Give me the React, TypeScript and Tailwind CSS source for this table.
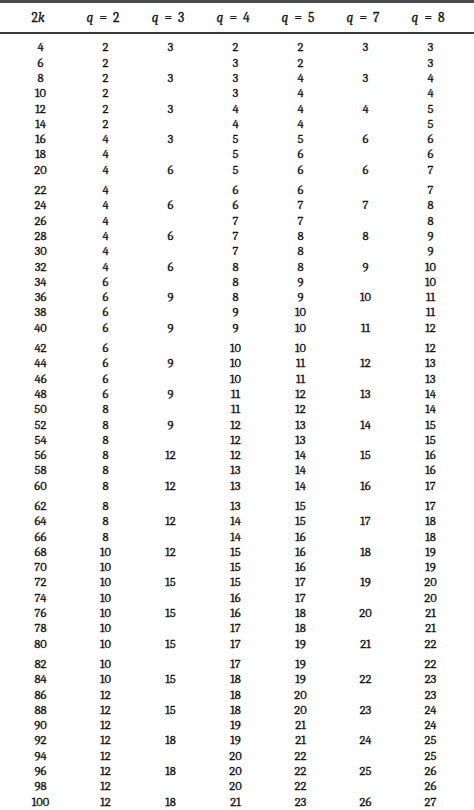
const heads = ["2", "3", "4", "5", "7", "8"];

// 2k, q=2, q=3, q=4, q=5, q=7, q=8  ("" = no entry)
const groups: string[][][] = [
  [
    ["4", "2", "3", "2", "2", "3", "3"],
    ["6", "2", "", "3", "2", "", "3"],
    ["8", "2", "3", "3", "4", "3", "4"],
    ["10", "2", "", "3", "4", "", "4"],
    ["12", "2", "3", "4", "4", "4", "5"],
    ["14", "2", "", "4", "4", "", "5"],
    ["16", "4", "3", "5", "5", "6", "6"],
    ["18", "4", "", "5", "6", "", "6"],
    ["20", "4", "6", "5", "6", "6", "7"],
  ],
  [
    ["22", "4", "", "6", "6", "", "7"],
    ["24", "4", "6", "6", "7", "7", "8"],
    ["26", "4", "", "7", "7", "", "8"],
    ["28", "4", "6", "7", "8", "8", "9"],
    ["30", "4", "", "7", "8", "", "9"],
    ["32", "4", "6", "8", "8", "9", "10"],
    ["34", "6", "", "8", "9", "", "10"],
    ["36", "6", "9", "8", "9", "10", "11"],
    ["38", "6", "", "9", "10", "", "11"],
    ["40", "6", "9", "9", "10", "11", "12"],
  ],
  [
    ["42", "6", "", "10", "10", "", "12"],
    ["44", "6", "9", "10", "11", "12", "13"],
    ["46", "6", "", "10", "11", "", "13"],
    ["48", "6", "9", "11", "12", "13", "14"],
    ["50", "8", "", "11", "12", "", "14"],
    ["52", "8", "9", "12", "13", "14", "15"],
    ["54", "8", "", "12", "13", "", "15"],
    ["56", "8", "12", "12", "14", "15", "16"],
    ["58", "8", "", "13", "14", "", "16"],
    ["60", "8", "12", "13", "14", "16", "17"],
  ],
  [
    ["62", "8", "", "13", "15", "", "17"],
    ["64", "8", "12", "14", "15", "17", "18"],
    ["66", "8", "", "14", "16", "", "18"],
    ["68", "10", "12", "15", "16", "18", "19"],
    ["70", "10", "", "15", "16", "", "19"],
    ["72", "10", "15", "15", "17", "19", "20"],
    ["74", "10", "", "16", "17", "", "20"],
    ["76", "10", "15", "16", "18", "20", "21"],
    ["78", "10", "", "17", "18", "", "21"],
    ["80", "10", "15", "17", "19", "21", "22"],
  ],
  [
    ["82", "10", "", "17", "19", "", "22"],
    ["84", "10", "15", "18", "19", "22", "23"],
    ["86", "12", "", "18", "20", "", "23"],
    ["88", "12", "15", "18", "20", "23", "24"],
    ["90", "12", "", "19", "21", "", "24"],
    ["92", "12", "18", "19", "21", "24", "25"],
    ["94", "12", "", "20", "22", "", "25"],
    ["96", "12", "18", "20", "22", "25", "26"],
    ["98", "12", "", "20", "22", "", "26"],
    ["100", "12", "18", "21", "23", "26", "27"],
  ],
];

export default function App() {
  return (
    <div className="w-[474px] h-[810px] overflow-hidden bg-white text-[#111] font-serif [font-family:Liberation_Serif,Times_New_Roman,serif] [-webkit-text-stroke:0.3px_#111]">
      {/* top rule */}
      <div className="h-[3px] bg-[#4a4a4a]" />

      {/* header */}
      <div className="grid grid-cols-[repeat(7,65px)] px-[8px] h-[29px] items-center text-[13.5px] leading-none">
        <div className="text-center pr-[5px]">
          2<span className="italic">k</span>
        </div>
        {heads.map((h) => (
          <div key={h} className="text-center pr-[5px]">
            <span className="italic">q</span>
            <span className="mx-[6px]">=</span>
            {h}
          </div>
        ))}
      </div>
      <div className="h-[1.5px] bg-[#3c3c3c]" />

      {/* body */}
      <div className="pt-[6.5px]">
        {groups.map((rows, gi) => (
          <div key={gi} className={gi > 0 ? "mt-[5px]" : ""}>
            {rows.map((r) => (
              <div
                key={r[0]}
                className="grid grid-cols-[repeat(7,65px)] px-[8px] h-[15.3px] items-center text-[12.5px] leading-none"
              >
                {r.map((v, i) => (
                  <div key={i} className="text-center">
                    {v}
                  </div>
                ))}
              </div>
            ))}
          </div>
        ))}
      </div>
    </div>
  );
}
